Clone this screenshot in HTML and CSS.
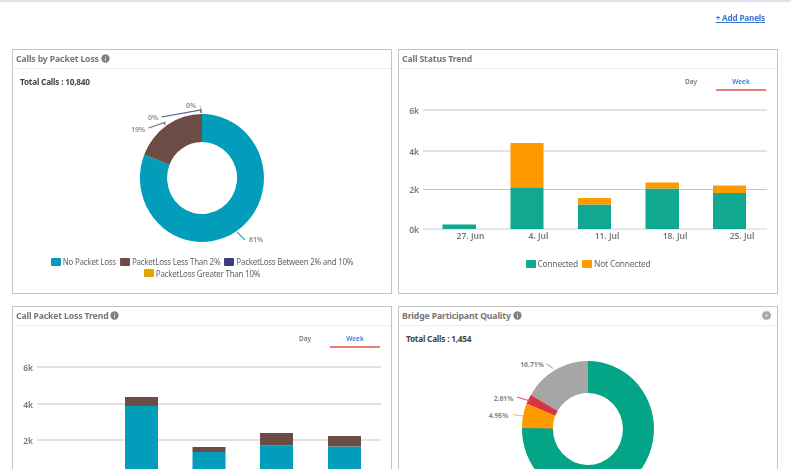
FILE: index.html
```html
<!DOCTYPE html>
<html lang="en">
<head>
<meta charset="utf-8">
<title>Call Dashboard</title>
<link rel="stylesheet" href="styles.css">
</head>
<body>
<main class="page">
  <div class="toolbar"><a class="add-link" href="#">+ Add Panels</a></div>
  <div class="grid">

    <section class="panel">
      <header class="panel-head">
        <h2>Calls by Packet Loss</h2>
        <svg class="info" viewBox="0 0 10 10"><circle cx="5" cy="5" r="4.6" fill="#808080"/><path d="M5 4.4v3M5 2.4v1" stroke="#ddd" stroke-width="1.1"/></svg>
      </header>
      <div class="total">Total Calls : 10,840</div>
      <svg class="chart chart-donut" viewBox="13 91 378 163">
        <path fill="#029dbb" d="M202 114A62 64 0 1 1 144.3 154.4L169.5 164.8A35 36 0 1 0 202 142Z"/>
        <path fill="#6d4c45" d="M202 114A62 64 0 0 0 144.3 154.4L169.5 164.8A35 36 0 0 1 202 142Z"/>
        <g fill="none" stroke-width="1.2">
          <path stroke="#efbd52" d="M200 105.5L201.5 113"/>
          <path stroke="#55548f" d="M161.5 117L201 110V113"/>
          <path stroke="#8d6f69" d="M148.5 128L165 122.5L164.5 125"/>
          <path stroke="#33aecb" d="M237 232L245 240"/>
        </g>
        <g class="pct">
          <text x="191" y="108" text-anchor="middle">0%</text>
          <text x="153" y="120" text-anchor="middle">0%</text>
          <text x="138" y="131.500" text-anchor="middle">19%</text>
          <text x="256" y="241.500" text-anchor="middle">81%</text>
        </g>
      </svg>
      <div class="legend legend-wrap">
        <span class="key"><i class="swatch teal"></i>No Packet Loss</span>
        <span class="key"><i class="swatch brown"></i>PacketLoss Less Than 2%</span>
        <span class="key"><i class="swatch navy"></i>PacketLoss Between 2% and 10%</span>
        <span class="key"><i class="swatch gold"></i>PacketLoss Greater Than 10%</span>
      </div>
    </section>

    <section class="panel">
      <header class="panel-head"><h2>Call Status Trend</h2></header>
      <div class="tabs"><span class="tab">Day</span><span class="tab active">Week</span></div>
      <svg class="chart chart-bars" viewBox="399 91 378 163">
        <g class="grid-lines">
          <path d="M423 110H767M423 151H767M423 189.500H767"/>
          <path class="baseline" d="M423 229H767"/>
        </g>
        <g class="axis">
          <text x="419" y="113.500" text-anchor="end">6k</text>
          <text x="419" y="154.500" text-anchor="end">4k</text>
          <text x="419" y="193" text-anchor="end">2k</text>
          <text x="419" y="232.500" text-anchor="end">0k</text>
          <text x="470.500" y="238.500" text-anchor="middle">27. Jun</text>
          <text x="538.500" y="238.500" text-anchor="middle">4. Jul</text>
          <text x="607" y="238.500" text-anchor="middle">11. Jul</text>
          <text x="675" y="238.500" text-anchor="middle">18. Jul</text>
          <text x="742" y="238.500" text-anchor="middle">25. Jul</text>
        </g>
        <g fill="#10a890">
          <rect x="442.500" y="224.500" width="33.500" height="4.500"/>
          <rect x="510.500" y="188" width="33" height="41"/>
          <rect x="578" y="204.500" width="33" height="24.500"/>
          <rect x="645.500" y="188.500" width="33.500" height="40.500"/>
          <rect x="713" y="193" width="33" height="36"/>
        </g>
        <g fill="#ff9900">
          <rect x="510.500" y="143" width="33" height="45"/>
          <rect x="578" y="198" width="33" height="6.500"/>
          <rect x="645.500" y="182.500" width="33.500" height="6"/>
          <rect x="713" y="185.500" width="33" height="7.500"/>
        </g>
      </svg>
      <div class="legend legend-status">
        <span class="key"><i class="swatch green"></i>Connected</span>
        <span class="key"><i class="swatch orange"></i>Not Connected</span>
      </div>
    </section>

    <section class="panel">
      <header class="panel-head">
        <h2>Call Packet Loss Trend</h2>
        <svg class="info" viewBox="0 0 10 10"><circle cx="5" cy="5" r="4.6" fill="#808080"/><path d="M5 4.4v3M5 2.400v1" stroke="#ddd" stroke-width="1.1"/></svg>
      </header>
      <div class="tabs"><span class="tab">Day</span><span class="tab active">Week</span></div>
      <svg class="chart chart-low" viewBox="13 349 378 130">
        <g class="grid-lines"><path d="M37 368H381M37 405H381M37 441H381"/></g>
        <g class="axis">
          <text x="33" y="371.500" text-anchor="end">6k</text>
          <text x="33" y="408.500" text-anchor="end">4k</text>
          <text x="33" y="444.500" text-anchor="end">2k</text>
        </g>
        <g fill="#029dbb">
          <rect x="125" y="407" width="33" height="72"/>
          <rect x="192.500" y="453" width="33" height="26"/>
          <rect x="260" y="446.500" width="33" height="33"/>
          <rect x="328" y="447.500" width="33" height="32"/>
        </g>
        <g fill="#6d4c45">
          <rect x="125" y="398" width="33" height="9"/>
          <rect x="192.500" y="448" width="33" height="5"/>
          <rect x="260" y="434" width="33" height="12.500"/>
          <rect x="328" y="437" width="33" height="10.500"/>
        </g>
      </svg>
    </section>

    <section class="panel">
      <header class="panel-head">
        <h2>Bridge Participant Quality</h2>
        <svg class="info" viewBox="0 0 10 10"><circle cx="5" cy="5" r="4.6" fill="#808080"/><path d="M5 4.4v3M5 2.400v1" stroke="#ddd" stroke-width="1.1"/></svg>
        <svg class="gear" viewBox="0 0 12 12"><circle cx="6" cy="6" r="4.300" fill="#a8a8a8" stroke="#a8a8a8" stroke-width="1.600" stroke-dasharray="1.500 1.200"/><circle cx="6" cy="6" r="1.800" fill="#c9c9c9"/></svg>
      </header>
      <div class="total">Total Calls : 1,454</div>
      <svg class="chart chart-low" viewBox="399 349 378 130">
        <path fill="#04a586" d="M588 362A66 68 0 1 1 522 428.500L553 429A35 36 0 1 0 588 394Z"/>
        <path fill="#a6a6a6" d="M588 362A66 68 0 0 0 530.800 396L557.700 412A35 36 0 0 1 588 394Z"/>
        <path fill="#d53545" d="M530.800 396A66 68 0 0 0 526.500 404.500L555 417L557.700 412Z"/>
        <path fill="#ff9900" d="M526.500 404.500A66 68 0 0 0 522 429L553 429.500A35 36 0 0 1 555 416.500Z"/>
        <g fill="none" stroke-width="1.200">
          <path stroke="#b5b5b5" d="M547 365L553 369.500"/>
          <path stroke="#df5b67" d="M517 398L530 402"/>
          <path stroke="#ffb24d" d="M513 415.500L523 417"/>
        </g>
        <g class="pct pct-bold">
          <text x="532" y="368" text-anchor="middle">16.71%</text>
          <text x="503.500" y="402" text-anchor="middle">2.61%</text>
          <text x="498.500" y="419" text-anchor="middle">4.95%</text>
        </g>
      </svg>
    </section>

  </div>
</main>
</body>
</html>
```

FILE: styles.css
```css
* { box-sizing: border-box; }
html, body { margin: 0; height: 469px; overflow: hidden; background: #fff; }
body { font-family: "Noto Sans", "Open Sans", sans-serif; color: #666; }
.page { height: 469px; border-top: 2px solid #dfe3f0; filter: blur(0.6px); }
.toolbar { display: flex; justify-content: flex-end; height: 47px; padding: 10px 26px 0 0; }
.add-link { font-size: 8.200px; line-height: 12px; font-weight: 700; letter-spacing: -0.2px; color: #3a78d6; }
.grid { display: grid; grid-template-columns: 380px 380px; grid-auto-rows: 245px; gap: 12px 6px; width: 782px; padding-left: 12px; border-right: 1px solid #f6f6f6; }
.panel { display: flex; flex-direction: column; border: 1px solid #c4c4c4; background: #fff; min-width: 0; }
.panel-head { flex: none; display: flex; align-items: center; gap: 2px; height: 19px; padding: 0 4px 1px 3px; border-bottom: 1px solid #eeeeee; }
.panel-head h2 { margin: 0; font-size: 8.700px; line-height: 12px; font-weight: 700; letter-spacing: -0.15px; color: #777; white-space: nowrap; }
.info { width: 9px; height: 9px; flex: none; }
.gear { width: 11px; height: 11px; margin-left: auto; margin-right: 1px; flex: none; }
.total { flex: none; height: 22px; padding: 7px 0 0 7px; font-size: 8.200px; line-height: 12px; font-weight: 700; letter-spacing: -0.2px; color: #444; }
.tabs { flex: none; display: flex; justify-content: flex-end; height: 22px; padding-right: 11px; }
.tab { width: 50px; padding-top: 8px; text-align: center; font-size: 6.500px; line-height: 10px; font-weight: 600; color: #777; }
.tab.active { color: #3f78d8; border-bottom: 2px solid #ef7b78; }
.chart { display: block; flex: none; width: 378px; }
.chart-donut, .chart-bars { height: 163px; }
.chart-low { height: 130px; }
.grid-lines path { fill: none; stroke: #c4c4c4; stroke-width: 1; }
.grid-lines .baseline { stroke: #c5d2e4; }
.axis text { font-size: 8.500px; font-weight: 600; fill: #777; }
.pct text { font-size: 7px; font-weight: 600; fill: #888; }
.pct-bold text { font-size: 6.800px; font-weight: 700; }
.legend { display: flex; flex-wrap: wrap; justify-content: center; line-height: 11.500px; color: #666; }
.legend-wrap { column-gap: 4px; margin-top: 2px; padding: 0 30px; font-size: 8px; letter-spacing: -0.25px; }
.legend-status { column-gap: 4px; margin-top: 4px; font-size: 8.400px; letter-spacing: -0.2px; }
.key { display: inline-flex; align-items: center; gap: 2px; white-space: nowrap; }
.swatch { display: block; width: 10px; height: 8px; border-radius: 1px; }
.teal { background: #029dbb; }
.brown { background: #6d4c45; }
.navy { background: #3c3a80; }
.gold { background: #dfa700; }
.green { background: #10a890; }
.orange { background: #ff9900; }
```
